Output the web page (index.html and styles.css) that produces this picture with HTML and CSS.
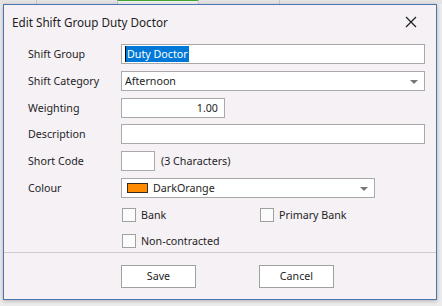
FILE: index.html
```html
<!DOCTYPE html>
<html lang="en">
<head>
  <meta charset="UTF-8">
  <title>Edit Shift Group</title>
  <link rel="stylesheet" href="styles.css">
</head>
<body>

<div class="backdrop">
  <div class="tabs">
    <span class="tab"></span>
    <span class="tab active"></span>
    <span class="tab"></span>
    <span class="tab"></span>
  </div>
</div>

<div class="dialog">
  <div class="titlebar">
    <span class="title">Edit Shift Group Duty Doctor</span>
    <svg class="close" width="12" height="12" viewBox="0 0 12 12"><path d="M1 1L11 11M11 1L1 11" stroke="#1e1e1e" stroke-width="1.2"/></svg>
  </div>

  <div class="form">
    <div class="row">
      <label>Shift Group</label>
      <div class="field wide"><span class="sel">Duty Doctor</span></div>
    </div>
    <div class="row">
      <label>Shift Category</label>
      <div class="field wide combo">Afternoon<span class="arrow"></span></div>
    </div>
    <div class="row tight">
      <label>Weighting</label>
      <div class="field num">1.00</div>
    </div>
    <div class="row">
      <label>Description</label>
      <div class="field wide"></div>
    </div>
    <div class="row">
      <label>Short Code</label>
      <div class="field code"></div>
      <span class="hint">(3 Characters)</span>
    </div>
    <div class="row">
      <label>Colour</label>
      <div class="field colour combo"><span class="swatch"></span>DarkOrange<span class="arrow"></span></div>
    </div>
    <div class="checks">
      <div class="check"><span class="box"></span>Bank</div>
      <div class="check"><span class="box"></span>Primary Bank</div>
      <div class="check"><span class="box"></span>Non-contracted</div>
    </div>
  </div>

  <div class="footer">
    <button>Save</button>
    <button>Cancel</button>
  </div>
</div>

</body>
</html>
```

FILE: styles.css
```css
body { margin: 0; background: #ececec; font-family: "Noto Sans", "Open Sans", sans-serif; font-size: 10.7px; color: #1e1e1e; width: 442px; height: 306px; overflow: hidden; position: relative; }
.backdrop { position: absolute; top: 0; left: 0; right: 0; height: 4px; background: #e4e4e4; }
.tabs { display: flex; height: 4px; margin-left: 36px; }
.tab { width: 80px; border-left: 1px solid #c8c8c8; }
.tab.active { border-top: 1px solid #3fa535; background: #f0f0f0; }

.dialog { position: absolute; top: 4px; left: 3px; width: 432px; height: 294px; background: #f5f1f5; border: 1px solid #4a75b3; box-shadow: 0 1px 4px rgba(0,0,0,0.25); display: flex; flex-direction: column; }
.titlebar { height: 32px; display: flex; align-items: center; justify-content: space-between; padding: 1px 19px 0 8px; box-sizing: border-box; font-size: 11.7px; }
.close { display: block; }

.form { padding-top: 7px; flex: 1; }
.row { display: flex; align-items: center; height: 20px; margin-bottom: 7px; }
.row.tight { margin-bottom: 6px; }
.row label { width: 93px; padding-left: 24px; }
.field { box-sizing: border-box; height: 20px; border: 1px solid #a9a9a9; background: #fff; display: flex; align-items: center; padding: 0 3px; position: relative; }
.field.wide { width: 304px; }
.field.num { width: 104px; justify-content: flex-end; padding-right: 6px; }
.field.code { width: 34px; }
.field.colour { width: 254px; }
.sel { background: #0078d7; color: #fff; padding: 1px 1px; border-left: 1px solid #000; }
.hint { margin-left: 6px; }
.arrow { position: absolute; right: 6px; top: 8px; width: 0; height: 0; border-left: 4px solid transparent; border-right: 4px solid transparent; border-top: 4px solid #777; }
.swatch { width: 19px; height: 8px; background: #ff8c00; border: 1px solid #3a2a20; margin: 0 5px 0 2px; }

.checks { display: grid; grid-template-columns: 138px 138px; grid-auto-rows: 20px; row-gap: 6px; margin: 6px 0 0 117px; }
.check { display: flex; align-items: center; }
.box { box-sizing: border-box; width: 14px; height: 14px; border: 1px solid #a0a0a0; background: #fbfbfb; margin: 0 5px 0 1px; }

.footer { border-top: 1px solid #cfcbcf; height: 46px; display: flex; align-items: center; gap: 63px; padding-left: 117px; }
button { width: 75px; height: 23px; background: #fff; border: 1px solid #a0a0a0; font: inherit; color: #1e1e1e; padding: 0; }
```
